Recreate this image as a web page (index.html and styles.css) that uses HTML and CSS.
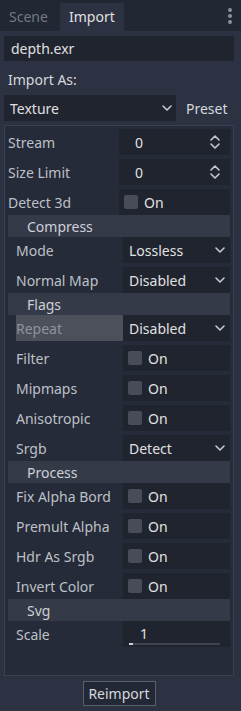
FILE: index.html
```html
<!DOCTYPE html>
<html>
<head>
<meta charset="utf-8">
<link rel="stylesheet" href="styles.css">
</head>
<body>
<div class="tabbar">
  <div class="tab tab-scene">Scene</div>
  <div class="tab tab-active">Import</div>
  <div class="menu"><span></span><span></span><span></span></div>
</div>
<div class="dock">
  <div class="file-field">depth.exr</div>
  <div class="import-as">Import As:</div>
  <div class="type-row">
    <div class="option">Texture<svg class="chev" width="10" height="6" viewBox="0 0 10 6"><polyline points="1,1 5,5 9,1"/></svg></div>
    <div class="preset">Preset</div>
  </div>
  <div class="inspector">
    <div class="group">
      <div class="row"><div class="label">Stream</div><div class="value spin"><span class="num">0</span><svg class="spinner" width="10" height="14" viewBox="0 0 10 14"><polyline points="1,5 5,1 9,5"/><polyline points="1,9 5,13 9,9"/></svg></div></div>
      <div class="row"><div class="label">Size Limit</div><div class="value spin"><span class="num">0</span><svg class="spinner" width="10" height="14" viewBox="0 0 10 14"><polyline points="1,5 5,1 9,5"/><polyline points="1,9 5,13 9,9"/></svg></div></div>
      <div class="row"><div class="label">Detect 3d</div><div class="value check"><span class="box"></span>On</div></div>
    </div>
    <div class="header">Compress</div>
    <div class="group sub">
      <div class="row"><div class="label">Mode</div><div class="value drop">Lossless<svg class="chev" width="10" height="6" viewBox="0 0 10 6"><polyline points="1,1 5,5 9,1"/></svg></div></div>
      <div class="row"><div class="label">Normal Map</div><div class="value drop">Disabled<svg class="chev" width="10" height="6" viewBox="0 0 10 6"><polyline points="1,1 5,5 9,1"/></svg></div></div>
    </div>
    <div class="header">Flags</div>
    <div class="group sub">
      <div class="row"><div class="label hover">Repeat</div><div class="value drop">Disabled<svg class="chev" width="10" height="6" viewBox="0 0 10 6"><polyline points="1,1 5,5 9,1"/></svg></div></div>
      <div class="row"><div class="label">Filter</div><div class="value check"><span class="box"></span>On</div></div>
      <div class="row"><div class="label">Mipmaps</div><div class="value check"><span class="box"></span>On</div></div>
      <div class="row"><div class="label">Anisotropic</div><div class="value check"><span class="box"></span>On</div></div>
      <div class="row"><div class="label">Srgb</div><div class="value drop">Detect<svg class="chev" width="10" height="6" viewBox="0 0 10 6"><polyline points="1,1 5,5 9,1"/></svg></div></div>
    </div>
    <div class="header">Process</div>
    <div class="group sub">
      <div class="row"><div class="label">Fix Alpha Bord</div><div class="value check"><span class="box"></span>On</div></div>
      <div class="row"><div class="label">Premult Alpha</div><div class="value check"><span class="box"></span>On</div></div>
      <div class="row"><div class="label">Hdr As Srgb</div><div class="value check"><span class="box"></span>On</div></div>
      <div class="row"><div class="label">Invert Color</div><div class="value check"><span class="box"></span>On</div></div>
    </div>
    <div class="header">Svg</div>
    <div class="group sub">
      <div class="row"><div class="label">Scale</div><div class="value slider"><span class="num">1</span><span class="track"><span class="grab"></span></span></div></div>
    </div>
  </div>
  <div class="actions"><div class="reimport">Reimport</div></div>
</div>
</body>
</html>
```

FILE: styles.css
```css
* { box-sizing: border-box; }
html, body { margin: 0; padding: 0; }
body {
  width: 241px;
  height: 711px;
  background: #2c3242;
  font-family: "Noto Sans", "DejaVu Sans", sans-serif;
  font-size: 14px;
  color: #e0e0e0;
  overflow: hidden;
}
.tabbar {
  height: 31px;
  background: #222734;
  display: flex;
  align-items: flex-end;
  position: relative;
}
.tab {
  height: 28px;
  display: flex;
  align-items: center;
  padding-bottom: 1px;
  padding-left: 9px;
}
.tab-scene { width: 60px; color: #737887; }
.tab-active { width: 64px; background: #2c3242; color: #e0e0e0; }
.menu {
  margin-left: auto;
  margin-right: 9px;
  align-self: flex-start;
  margin-top: 8px;
  display: flex;
  flex-direction: column;
  gap: 2px;
}
.menu span {
  width: 4px;
  height: 4px;
  border-radius: 50%;
  background: #8c909b;
}
.dock {
  padding: 5px 7px 0 4px;
}
.file-field {
  height: 25px;
  background: #20242f;
  padding-left: 7px;
  display: flex;
  align-items: center;
  border-radius: 1px;
}
.import-as {
  height: 34px;
  display: flex;
  align-items: center;
  padding-left: 4px;
  padding-top: 2px;
  color: #d6d8dd;
}
.type-row {
  height: 26px;
  display: flex;
}
.option {
  width: 172px;
  background: #20242f;
  display: flex;
  align-items: center;
  padding-left: 6px;
  padding-right: 4px;
}
.option .chev { margin-left: auto; }
.preset {
  flex: 1;
  display: flex;
  align-items: center;
  padding-left: 10px;
  color: #d6d8dd;
}
svg polyline {
  fill: none;
  stroke: #c6c9cf;
  stroke-width: 1.6;
  stroke-linecap: round;
  stroke-linejoin: round;
}
.inspector {
  margin-top: 4px;
  height: 551px;
  background: #262b39;
  border: 1px solid #3a4051;
  padding: 3px 3px 0 3px;
}
.group {
  display: flex;
  flex-direction: column;
  gap: 4px;
}
.group.sub { padding-left: 8px; }
.row {
  height: 26px;
  display: flex;
}
.label {
  width: 111px;
  display: flex;
  align-items: center;
  color: #bdc0c7;
  white-space: nowrap;
  overflow: hidden;
}
.sub .label { width: 107px; }
.label.hover { background: #4b505b; color: #8f939c; }
.value {
  flex: 1;
  background: #20242f;
  display: flex;
  align-items: center;
  color: #e0e0e0;
}
.spin { padding-left: 16px; padding-right: 10px; }
.spin .spinner { margin-left: auto; }
.drop { padding-left: 6px; padding-right: 5px; }
.drop .chev { margin-left: auto; }
.check { padding-left: 5px; }
.check .box {
  width: 14px;
  height: 14px;
  border-radius: 2px;
  background: #474c58;
  margin-right: 6px;
}
.slider {
  position: relative;
  padding-left: 17px;
}
.slider .num { margin-top: -1px; }
.track {
  position: absolute;
  left: 6px;
  right: 10px;
  top: 22px;
  height: 2px;
  background: #3e4350;
}
.grab {
  position: absolute;
  left: 0;
  top: 0;
  width: 4px;
  height: 2px;
  background: #cfd1d6;
}
.header {
  height: 22px;
  background: #353a49;
  display: flex;
  align-items: center;
  padding-left: 19px;
  color: #cdd0d6;
}
.actions {
  display: flex;
  justify-content: center;
  padding-top: 5px;
}
.reimport {
  width: 73px;
  height: 25px;
  border: 1px solid #5a5f6d;
  background: #232837;
  display: flex;
  align-items: center;
  justify-content: center;
  color: #d6d8dd;
}
```
